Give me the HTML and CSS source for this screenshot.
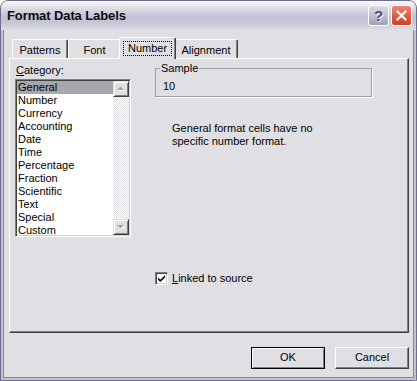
FILE: index.html
```html
<!DOCTYPE html>
<html lang="en">
<head>
    <meta charset="UTF-8">
    <title>Format Data Labels</title>
    <link rel="stylesheet" href="styles.css">
</head>
<body>
    <div class="window">
        <div class="titlebar">
            <span class="title">Format Data Labels</span>
            <div class="caption-buttons">
                <div class="cap-btn help">?</div>
                <div class="cap-btn close">
                    <svg width="19" height="19" viewBox="0 0 19 19">
                        <path d="M5.5 5.5 L13.5 13.5 M13.5 5.5 L5.5 13.5" stroke="#fff" stroke-width="2.2" stroke-linecap="square"/>
                    </svg>
                </div>
            </div>
        </div>

        <div class="client">
            <div class="tabs">
                <div class="tab tab-patterns">Patterns</div>
                <div class="tab tab-font">Font</div>
                <div class="tab tab-number selected"><span class="focus">Number</span></div>
                <div class="tab tab-alignment">Alignment</div>
            </div>

            <div class="panel">
                <div class="category">
                    <div class="field-label"><u>C</u>ategory:</div>
                    <div class="listbox">
                        <ul class="items">
                            <li class="active">General</li>
                            <li>Number</li>
                            <li>Currency</li>
                            <li>Accounting</li>
                            <li>Date</li>
                            <li>Time</li>
                            <li>Percentage</li>
                            <li>Fraction</li>
                            <li>Scientific</li>
                            <li>Text</li>
                            <li>Special</li>
                            <li>Custom</li>
                        </ul>
                        <div class="scrollbar">
                            <div class="sb-btn">
                                <svg width="12" height="12" viewBox="0 0 12 12">
                                    <path d="M3 8 L10 8 L6.5 4.5 Z" fill="#fff"/>
                                    <path d="M2 7 L9 7 L5.5 3.5 Z" fill="#a3a2a8"/>
                                </svg>
                            </div>
                            <div class="sb-track"></div>
                            <div class="sb-btn">
                                <svg width="12" height="12" viewBox="0 0 12 12">
                                    <path d="M3 5 L10 5 L6.5 8.5 Z" fill="#fff"/>
                                    <path d="M2 4 L9 4 L5.5 7.5 Z" fill="#a3a2a8"/>
                                </svg>
                            </div>
                        </div>
                    </div>
                </div>

                <div class="details">
                    <fieldset class="sample">
                        <legend>Sample</legend>
                        <div class="sample-value">10</div>
                    </fieldset>
                    <p class="desc">General format cells have no<br>specific number format.</p>
                    <div class="check">
                        <span class="check-box">
                            <svg width="9" height="9" viewBox="0 0 9 9">
                                <path d="M1 3.5 L3.3 5.8 L8 1.2 L8 3.4 L3.3 8 L1 5.7 Z" fill="#000"/>
                            </svg>
                        </span>
                        <span><u>L</u>inked to source</span>
                    </div>
                </div>
            </div>

            <div class="actions">
                <div class="btn default">OK</div>
                <div class="btn">Cancel</div>
            </div>
        </div>
    </div>
</body>
</html>
```

FILE: styles.css
```css
* {
    margin: 0;
    padding: 0;
    box-sizing: border-box;
}

body {
    font-family: "Liberation Sans", Arial, sans-serif;
    font-size: 11px;
    line-height: 13px;
    color: #000;
    background: #fff;
}

.window {
    width: 417px;
    height: 381px;
    border: 1px solid #6f6e90;
    border-radius: 8px 8px 0 0;
    background: #c3c2d4;
    display: flex;
    flex-direction: column;
    overflow: hidden;
}

/* Title bar */
.titlebar {
    flex: none;
    height: 29px;
    display: flex;
    align-items: center;
    justify-content: space-between;
    padding: 0 4px 0 6px;
    background: linear-gradient(to bottom, #fdfdfe 0%, #ececf2 12%, #d6d6e1 32%, #c1c1d1 55%, #c6c6d5 75%, #dedee8 100%);
}

.title {
    font-size: 13px;
    font-weight: 700;
    color: #0b0b12;
    letter-spacing: -0.1px;
}

.caption-buttons {
    display: flex;
    gap: 2px;
}

.cap-btn {
    width: 21px;
    height: 21px;
    border: 1px solid #fff;
    border-radius: 3px;
    display: flex;
    align-items: center;
    justify-content: center;
}

.help {
    background: linear-gradient(to bottom, #dcdce8 0%, #c0c0d4 50%, #9e9eb8 100%);
    color: #4e4d70;
    font-size: 15px;
    font-weight: 700;
    text-shadow: 1px 1px 0 #eeeef6;
}

.close {
    background: linear-gradient(to bottom, #ea8a72 0%, #dd5f45 50%, #c9432a 100%);
}

/* Dialog body */
.client {
    flex: 1;
    margin: 0 2px 2px;
    border: 1px solid #8584a4;
    border-top: 0;
    background: #e0dfe3;
    padding: 7px 4px 0 5px;
    display: flex;
    flex-direction: column;
}

.tabs {
    height: 21px;
    display: flex;
    align-items: flex-end;
    padding-left: 3px;
}

.tab {
    height: 19px;
    padding-top: 4px;
    text-align: center;
    background: #e0dfe3;
    border-top: 1px solid #fff;
    border-left: 1px solid #fff;
    border-right: 1px solid #404040;
    border-radius: 2px 2px 0 0;
    box-shadow: inset -1px 0 0 #808080;
}

.tab-patterns { width: 56px; }
.tab-font { width: 53px; }
.tab-number { width: 53px; }
.tab-alignment { width: 64px; }

.tab.selected {
    position: relative;
    z-index: 2;
    width: 57px;
    height: 22px;
    margin: 0 -2px -1px;
    padding-top: 3px;
}

.focus {
    display: inline-block;
    border: 1px dotted #000;
    padding: 0 4px;
}

.panel {
    height: 275px;
    display: flex;
    padding: 5px 0 0 5px;
    border-top: 1px solid #fff;
    border-left: 1px solid #fff;
    border-right: 1px solid #404040;
    border-bottom: 1px solid #404040;
    box-shadow: inset -1px -1px 0 #808080;
}

.category {
    width: 116px;
}

.field-label {
    height: 13px;
    margin: 0 0 2px 1px;
}

.listbox {
    height: 158px;
    display: flex;
    background: #fff;
    border: 1px solid;
    border-color: #808080 #fff #fff #808080;
    box-shadow: inset 1px 1px 0 #404040, inset -1px -1px 0 #d4d0c8;
    padding: 1px;
}

.items {
    list-style: none;
    flex: 1;
    overflow: hidden;
}

.items li {
    height: 13px;
    padding-left: 1px;
    white-space: nowrap;
}

.items li.active {
    background: #a7a6ab;
}

.scrollbar {
    width: 16px;
    display: flex;
    flex-direction: column;
}

.sb-btn {
    height: 16px;
    background: #e0dfe3;
    border: 1px solid;
    border-color: #e0dfe3 #404040 #404040 #e0dfe3;
    box-shadow: inset 1px 1px 0 #fff, inset -1px -1px 0 #808080;
    display: flex;
    align-items: center;
    justify-content: center;
}

.sb-track {
    flex: 1;
    background: repeating-conic-gradient(#fff 0 25%, #e0dfe3 0 50%) 0 0 / 2px 2px;
}

.details {
    margin-left: 24px;
    margin-top: -2px;
}

.sample {
    width: 217px;
    height: 35px;
    border: 1px solid #a2a1a8;
    box-shadow: 1px 1px 0 #fff;
    padding: 5px 7px 0;
}

.sample legend {
    margin-left: -3px;
    padding: 0 1px;
}

.desc {
    margin: 25px 0 0 17px;
}

.check {
    display: flex;
    align-items: center;
    gap: 4px;
    margin-top: 124px;
}

.check-box {
    width: 13px;
    height: 13px;
    background: #fff;
    border: 1px solid;
    border-color: #808080 #fff #fff #808080;
    box-shadow: inset 1px 1px 0 #404040, inset -1px -1px 0 #d4d0c8;
    display: flex;
    align-items: center;
    justify-content: center;
}

/* Buttons */
.actions {
    display: flex;
    justify-content: flex-end;
    gap: 10px;
    margin-top: 14px;
}

.btn {
    width: 74px;
    height: 22px;
    line-height: 18px;
    text-align: center;
    background: #e0dfe3;
    border: 1px solid;
    border-color: #fff #404040 #404040 #fff;
    box-shadow: inset -1px -1px 0 #808080;
}

.btn.default {
    border: 1px solid #000;
    box-shadow: inset 1px 1px 0 #fff, inset -1px -1px 0 #808080;
}
```
